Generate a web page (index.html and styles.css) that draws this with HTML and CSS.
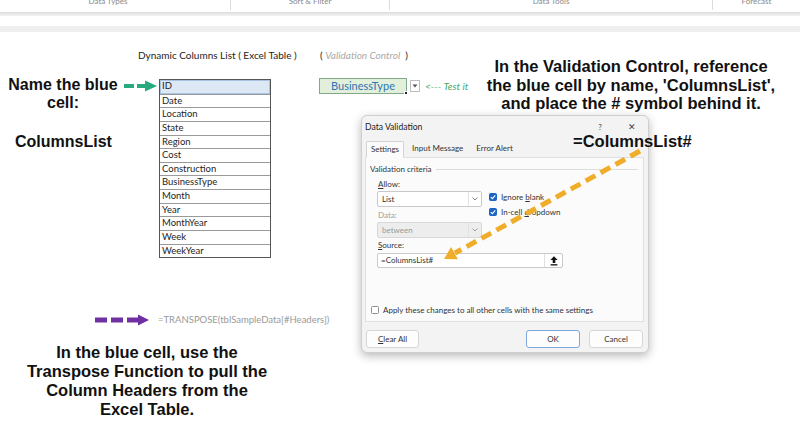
FILE: index.html
```html
<!DOCTYPE html>
<html>
<head>
<meta charset="utf-8">
<link rel="stylesheet" href="styles.css">
</head>
<body>
<div class="page">
  <div class="ribbon">
    <div class="rgroup g1"><span class="rlabel">Data Types</span></div>
    <div class="rgroup g2"><span class="rlabel">Sort &amp; Filter</span></div>
    <div class="rgroup g3"><span class="rlabel">Data Tools</span></div>
    <div class="rgroup g4"><span class="rlabel">Forecast</span></div>
  </div>
  <div class="band1"></div>
  <div class="band2"></div>

  <div class="caption title">Dynamic Columns List ( Excel Table )</div>
  <div class="caption vc">( <i>Validation Control</i>&nbsp; )</div>

  <div class="note note-name">Name the blue<br>cell:</div>
  <div class="note note-cols">ColumnsList</div>
  <div class="note note-right">In the Validation Control, reference<br>the blue cell by name, 'ColumnsList',<br>and place the # symbol behind it.</div>
  <div class="note note-bottom">In the blue cell, use the<br>Transpose Function to pull the<br>Column Headers from the<br>Excel Table.</div>

  <div class="list">
    <div class="row sel">ID</div>
    <div class="row">Date</div>
    <div class="row">Location</div>
    <div class="row">State</div>
    <div class="row">Region</div>
    <div class="row">Cost</div>
    <div class="row">Construction</div>
    <div class="row">BusinessType</div>
    <div class="row">Month</div>
    <div class="row">Year</div>
    <div class="row">MonthYear</div>
    <div class="row">Week</div>
    <div class="row">WeekYear</div>
  </div>

  <div class="vcontrol">
    <div class="vcell">BusinessType<span class="handle"></span></div>
    <div class="ddbtn"><svg width="6" height="4" viewBox="0 0 6 4"><polygon points="0.5,0.5 5.5,0.5 3,3.5" fill="#555"/></svg></div>
    <div class="testit">&lt;--- Test it</div>
  </div>

  <div class="formula">=TRANSPOSE(tblSampleData[#Headers])</div>

  <div class="dialog">
    <div class="dlg-titlebar">
      <span class="dlg-title">Data Validation</span>
      <span class="dlg-help">?</span>
      <span class="dlg-close">✕</span>
    </div>
    <div class="tabs">
      <span class="tab active">Settings</span>
      <span class="tab">Input Message</span>
      <span class="tab">Error Alert</span>
    </div>
    <div class="panel">
      <div class="legend"><span>Validation criteria</span><span class="legend-line"></span></div>
      <div class="criteria">
        <div class="crit-left">
          <div class="lbl"><u>A</u>llow:</div>
          <div class="select"><span class="sel-text">List</span><span class="sel-btn"><svg width="6" height="4" viewBox="0 0 6 4"><polyline points="0.5,0.5 3,3 5.5,0.5" fill="none" stroke="#777" stroke-width="0.9"/></svg></span></div>
          <div class="lbl dim">Data:</div>
          <div class="select disabled"><span class="sel-text">between</span><span class="sel-btn"><svg width="6" height="4" viewBox="0 0 6 4"><polyline points="0.5,0.5 3,3 5.5,0.5" fill="none" stroke="#999" stroke-width="0.9"/></svg></span></div>
        </div>
        <div class="crit-right">
          <div class="chk"><span class="box on"><svg width="8" height="8" viewBox="0 0 8 8"><polyline points="1.8,4.2 3.4,5.7 6.3,2.4" fill="none" stroke="#fff" stroke-width="1.1"/></svg></span><span class="chk-text">Ignore <u>b</u>lank</span></div>
          <div class="chk"><span class="box on"><svg width="8" height="8" viewBox="0 0 8 8"><polyline points="1.8,4.2 3.4,5.7 6.3,2.4" fill="none" stroke="#fff" stroke-width="1.1"/></svg></span><span class="chk-text">In-cell <u>d</u>ropdown</span></div>
        </div>
      </div>
      <div class="lbl src-lbl"><u>S</u>ource:</div>
      <div class="source"><span class="src-text">=ColumnsList#</span><span class="src-btn"><svg width="8" height="10" viewBox="0 0 8 10"><path d="M4 0.3 L7.6 4 H5.3 V7 H2.7 V4 H0.4 Z" fill="#111"/><rect x="0.6" y="8.2" width="6.8" height="1.3" fill="#111"/></svg></span></div>
      <div class="apply"><span class="box"></span><span class="chk-text">Apply these changes to all other cells with the same settings</span></div>
    </div>
    <div class="dlg-buttons">
      <span class="btn"><u>C</u>lear All</span>
      <span class="spacer"></span>
      <span class="btn ok">OK</span>
      <span class="btn">Cancel</span>
    </div>
  </div>

  <div class="note note-formula">=ColumnsList#</div>

  <svg class="arrows" width="800" height="440" viewBox="0 0 800 440">
    <line x1="124" y1="86" x2="147" y2="86" stroke="#29a97e" stroke-width="4" stroke-dasharray="10 3"/>
    <polygon points="145,80.5 157,86 145,91.5" fill="#29a97e"/>
    <line x1="95" y1="320" x2="139" y2="320" stroke="#7030a0" stroke-width="5" stroke-dasharray="12 4"/>
    <polygon points="138,314.5 149,320 138,325.5" fill="#7030a0"/>
    <line x1="640" y1="151" x2="455" y2="253" stroke="#f0ad2a" stroke-width="5" stroke-dasharray="11 6"/>
    <polygon points="444,259 457.9,259.3 451.1,247.1" fill="#f0ad2a"/>
  </svg>
</div>
</body>
</html>
```

FILE: styles.css
```css
* { box-sizing: border-box; }
body { margin: 0; background: #fff; font-family: Lato, "Liberation Sans", sans-serif; }
.page { position: relative; width: 800px; height: 440px; overflow: hidden; background: #fff; }

.ribbon { display: flex; height: 10px; overflow: hidden; }
.rgroup { height: 10px; text-align: center; border-right: 1px solid #dcdcdc; }
.g1 { width: 231px; padding-right: 14px; }
.g2 { width: 159px; }
.g3 { width: 323px; }
.g4 { flex: 1; border-right: none; }
.rlabel { display: block; font-size: 8px; line-height: 8px; margin-top: -3px; color: #8a8a8a; white-space: nowrap; }
.band1 { margin-top: 2px; height: 4px; background: linear-gradient(#dcdcdc, #f4f4f4); }
.band2 { margin-top: 10px; height: 6px; background: #efefef; }

.caption { position: absolute; top: 49px; font-size: 10px; line-height: 12px; color: #222; white-space: nowrap; }
.title { left: 138px; }
.vc { left: 320px; }
.vc i { color: #a8a8a8; }

.note { position: absolute; font-family: "Liberation Sans", Arial, sans-serif; font-weight: bold; color: #111; white-space: nowrap; }
.note-name { left: 0; width: 126px; top: 76px; text-align: center; font-size: 16px; line-height: 18px; }
.note-cols { left: 15px; top: 133px; font-size: 16px; line-height: 18px; }
.note-right { left: 480px; width: 302px; top: 57px; text-align: center; font-size: 16.5px; line-height: 18.5px; }
.note-formula { left: 573px; top: 132px; font-size: 16.5px; line-height: 18.5px; z-index: 2; }
.note-bottom { left: 0; width: 294px; top: 343px; text-align: center; font-size: 16.5px; line-height: 19px; }

.list { position: absolute; left: 159px; top: 79px; width: 112px; border: 1px solid #555; background: #fff; }
.row { height: 13.65px; border-top: 1px solid #9a9a9a; padding-left: 2px; font-size: 9.5px; line-height: 12.5px; color: #1e1e1e; }
.row.sel { border-top: none; background: #dde8f5; box-shadow: inset 0 0 0 1px #a9c3e3; }

.vcontrol { position: absolute; left: 319px; top: 78px; display: flex; align-items: center; }
.vcell { position: relative; width: 88px; height: 16px; background: #e2efda; border: 1px solid #7fa98a; color: #2e75b6; font-size: 11px; line-height: 14px; text-align: center; }
.handle { position: absolute; right: -2px; bottom: -2px; width: 2px; height: 2px; box-sizing: content-box; background: #222; border: 1px solid #fff; }
.ddbtn { margin-left: 3px; width: 10px; height: 12px; border: 1px solid #bdbdbd; background: #fff; display: flex; align-items: center; justify-content: center; }
.testit { margin-left: 5px; font-size: 10px; font-style: italic; color: #45a86a; white-space: nowrap; }

.formula { position: absolute; left: 158px; top: 314px; font-size: 9.5px; line-height: 12px; color: #9a9a9a; white-space: nowrap; }

.dialog { position: absolute; left: 361px; top: 115px; width: 288px; height: 238px; z-index: 1; display: flex; flex-direction: column; background: #f3f3f3; border: 1px solid #cfcfcf; border-radius: 6px; box-shadow: 0 3px 10px rgba(0,0,0,0.28); font-size: 8px; color: #333; }
.dlg-titlebar { height: 21px; display: flex; align-items: center; padding-left: 3px; padding-right: 10px; }
.dlg-title { flex: 1; font-size: 8.6px; color: #222; }
.dlg-help { width: 10px; text-align: center; margin-right: 21px; font-size: 8px; color: #444; }
.dlg-close { width: 12px; text-align: center; font-size: 9px; color: #444; }
.tabs { margin-top: 4px; height: 16px; display: flex; gap: 3px; padding-left: 4px; position: relative; z-index: 1; }
.tab { height: 16px; padding: 0 5px; line-height: 15px; color: #333; white-space: nowrap; }
.tab.active { background: #fbfbfb; border: 1px solid #d3d3d3; border-bottom-color: #fbfbfb; border-radius: 2px 2px 0 0; height: 17px; padding: 0 4px; }
.panel { height: 165px; margin: 0 4px 0 3px; background: #fbfbfb; border: 1px solid #e0e0e0; display: flex; flex-direction: column; padding: 6px 0 6px 0; }
.legend { display: flex; align-items: center; height: 10px; line-height: 10px; padding-left: 4px; padding-right: 5px; color: #333; }
.legend-line { flex: 1; height: 1px; background: #dedede; margin-left: 4px; }
.criteria { display: flex; margin-top: 5px; padding-left: 11px; }
.crit-left { width: 105px; }
.lbl { height: 10px; line-height: 10px; padding-left: 1px; color: #333; }
.lbl.dim { margin-top: 3px; color: #9d9d9d; }
.select { margin-top: 2px; height: 16px; display: flex; background: #fff; border: 1px solid #c9c9c9; border-radius: 2px; }
.select.disabled { background: #ededed; border-color: #d8d8d8; color: #9a9a9a; }
.sel-text { flex: 1; padding-left: 4px; line-height: 14px; }
.sel-btn { width: 13px; border-left: 1px solid #e2e2e2; display: flex; align-items: center; justify-content: center; }
.crit-right { margin-left: 7px; padding-top: 14px; display: flex; flex-direction: column; gap: 7px; }
.chk { display: flex; align-items: center; height: 8px; line-height: 8px; white-space: nowrap; color: #333; }
.chk-text { white-space: pre; }
.box { width: 8px; height: 8px; border: 1px solid #8a8a8a; border-radius: 1.5px; background: #fff; margin-right: 4px; flex: none; display: flex; }
.box.on { background: #1c64c4; border-color: #1c64c4; }
.box.on svg { margin: -1px; }
.src-lbl { margin-top: 2px; margin-left: 11px; }
.source { margin-top: 3px; margin-left: 11px; width: 186px; height: 15px; display: flex; background: #fff; border: 1px solid #c9c9c9; border-radius: 2px; }
.src-text { flex: 1; padding-left: 3px; line-height: 13px; color: #333; }
.src-btn { width: 18px; border-left: 1px solid #e0e0e0; display: flex; align-items: center; justify-content: center; }
.apply { margin-top: auto; padding-left: 5px; display: flex; align-items: center; height: 10px; white-space: nowrap; color: #333; }
.apply .box { border-color: #8d8d8d; }
.dlg-buttons { flex: 1; display: flex; align-items: flex-start; padding: 8px 5px 0 4px; gap: 9px; }
.spacer { flex: 1; }
.btn { width: 54px; height: 18px; line-height: 16px; text-align: center; background: #fdfdfd; border: 1px solid #d6d6d6; border-radius: 3px; color: #333; }
.btn:first-child { width: 53px; }
.btn.ok { border-color: #7ea7dc; }

.arrows { position: absolute; left: 0; top: 0; pointer-events: none; z-index: 3; }
```
